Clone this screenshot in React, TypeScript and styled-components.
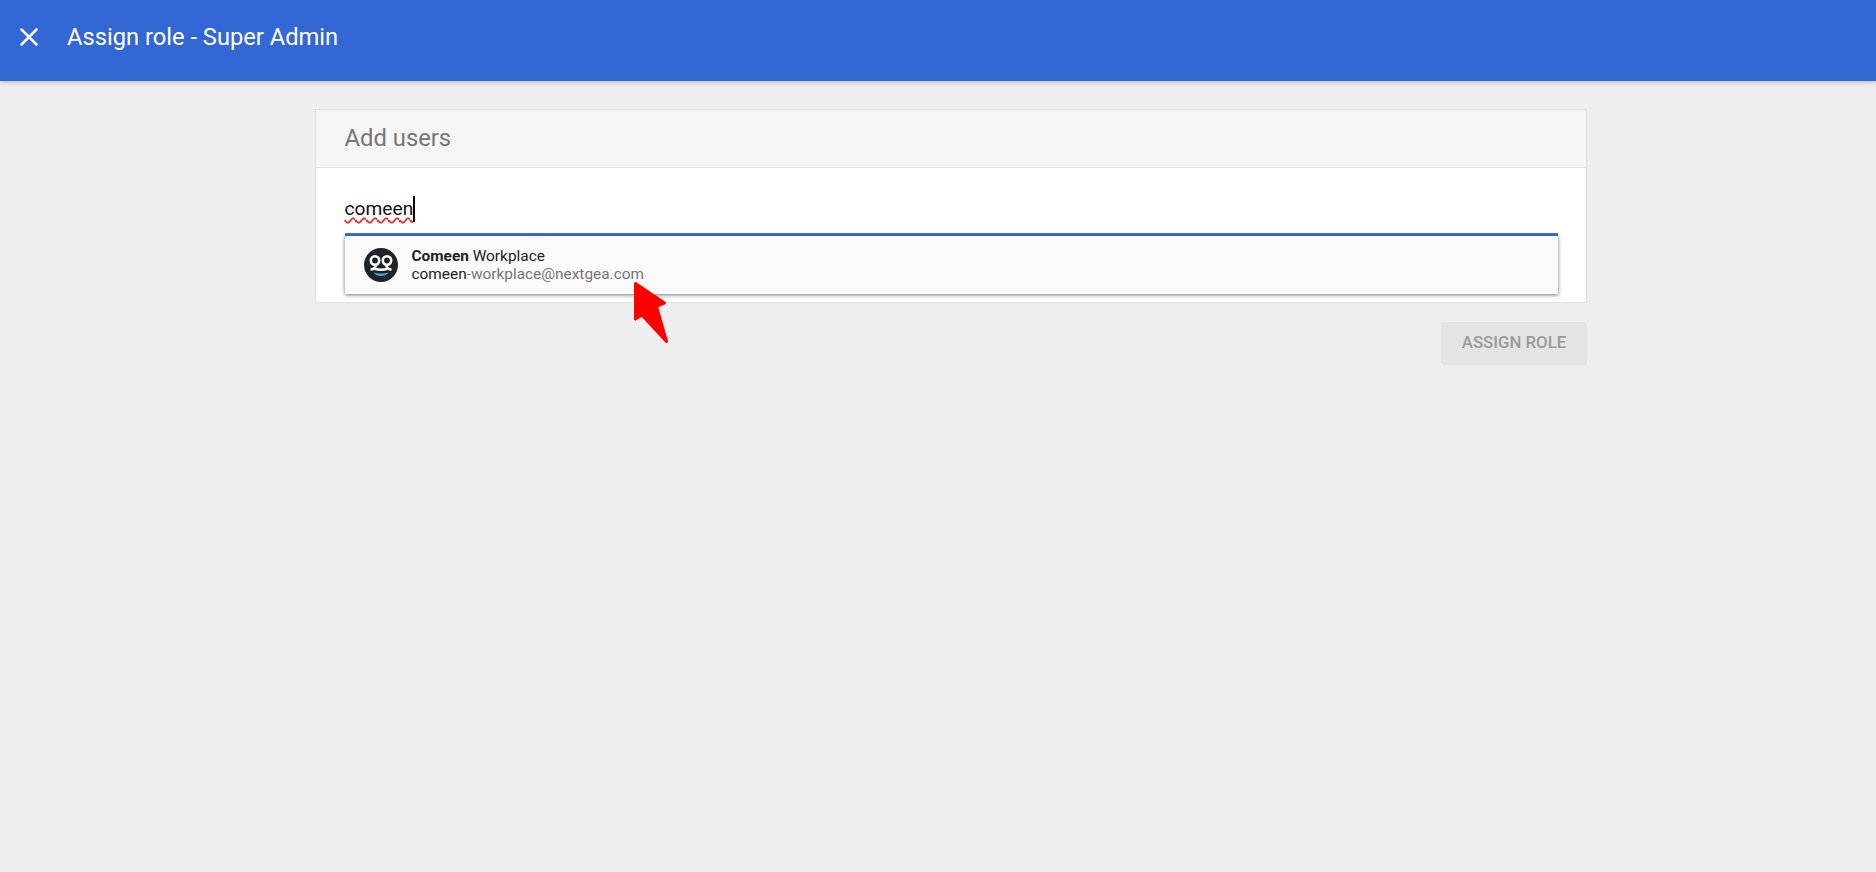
import * as React from 'react'
import styled, { createGlobalStyle } from 'styled-components'
import { X } from 'lucide-react'

const GlobalStyle = createGlobalStyle`
  html, body {
    margin: 0;
    padding: 0;
    height: 100%;
    background: #eeeeee;
    font-family: Roboto, 'Liberation Sans', sans-serif;
  }
`

const Page = styled.div`
  min-height: 872px;
  background: #eeeeee;
`

const TopBar = styled.header`
  display: flex;
  align-items: center;
  height: 81px;
  padding: 0 0 7px 14px;
  box-sizing: border-box;
  background: #3367d6;
  color: #ffffff;
  box-shadow: 0 1px 5px rgba(0, 0, 0, 0.25);
`

const CloseButton = styled.button`
  display: flex;
  width: 30px;
  height: 30px;
  padding: 0;
  border: 0;
  background: none;
  color: inherit;
`

const TopBarTitle = styled.h1`
  margin: 0 0 0 23px;
  font-size: 23.7px;
  font-weight: 400;
  line-height: 28px;
`

const Content = styled.main`
  width: 1272px;
  margin: 28px 0 0 315px;
`

const Card = styled.section`
  height: 194px;
  box-sizing: border-box;
  border: 1px solid #e0e0e0;
  background: #ffffff;
`

const CardHeader = styled.div`
  height: 58px;
  padding: 0 28.5px;
  box-sizing: border-box;
  border-bottom: 1px solid #e0e0e0;
  background: #f5f5f5;
  color: #757575;
  font-size: 23.8px;
  line-height: 56px;
`

const CardBody = styled.div`
  padding: 27px 28.5px 0;
`

const SearchInput = styled.div`
  height: 37px;
  padding-top: 1px;
  border-bottom: 3px solid #3d6fdb;
  color: #111111;
  font-size: 19.2px;
  line-height: 26px;
`

const TypedWord = styled.span`
  display: inline-block;
  height: 26px;
  margin-right: -2px;
  box-shadow: 2px 0 0 #000000;
  text-decoration: underline wavy #e53935 1.5px;
  text-underline-offset: 2px;
`

const Suggestions = styled.div`
  display: flex;
  align-items: center;
  height: 58px;
  padding-left: 19px;
  box-sizing: border-box;
  background: #fafafa;
  box-shadow: 0 1px 4px rgba(0, 0, 0, 0.55);
`

const Avatar = styled.svg`
  flex: none;
  width: 34px;
  height: 34px;
  margin-right: 14px;
`

const UserText = styled.div`
  font-size: 15.4px;
  line-height: 18px;
  color: #212121;
`

const Match = styled.b`
  font-weight: 700;
`

const Muted = styled.span`
  color: #757575;
`

const Actions = styled.div`
  display: flex;
  justify-content: flex-end;
  margin-top: 19px;
`

const AssignButton = styled.button`
  width: 146px;
  height: 43px;
  padding: 0 0 4px;
  border: 0;
  border-radius: 3px;
  background: #e4e4e4;
  color: #9a9a9a;
  font-family: inherit;
  font-size: 16.8px;
  font-weight: 500;
`

const Pointer = styled.svg`
  position: absolute;
  left: 632px;
  top: 280px;
  width: 38px;
  height: 66px;
`

const ComeenLogo = () => (
  <Avatar viewBox="0 0 34 34">
    <circle cx="17" cy="17" r="17" fill="#1d2327" />
    <g fill="none" stroke="#fff" strokeWidth="2.6">
      <circle cx="11" cy="12.500" r="4.200" />
      <circle cx="23" cy="12.500" r="4.200" />
      <path d="M6.500 21.500c3 0 5-2 5.500-5M27.500 21.500c-3 0-5-2-5.500-5M11 21q6 1.500 12 0" />
    </g>
    <path d="M9.500 24.500q7.500 2 15 0q-2.500 3.500-7.500 3.500t-7.500-3.500z" fill="#4f9be3" />
  </Avatar>
)

export default function App() {
  return (
    <Page>
      <GlobalStyle />
      <TopBar>
        <CloseButton aria-label="Close">
          <X size={30} strokeWidth={2} />
        </CloseButton>
        <TopBarTitle>Assign role - Super Admin</TopBarTitle>
      </TopBar>
      <Content>
        <Card>
          <CardHeader>Add users</CardHeader>
          <CardBody>
            <SearchInput>
              <TypedWord>comeen</TypedWord>
            </SearchInput>
            <Suggestions>
              <ComeenLogo />
              <UserText>
                <div>
                  <Match>Comeen</Match> Workplace
                </div>
                <div>
                  comeen<Muted>-workplace@nextgea.com</Muted>
                </div>
              </UserText>
            </Suggestions>
          </CardBody>
        </Card>
        <Actions>
          <AssignButton disabled>ASSIGN ROLE</AssignButton>
        </Actions>
      </Content>
      <Pointer viewBox="0 0 38 66">
        <path d="M3.500 3.500 L32.500 23 L24.500 26.500 L34.500 61.500 L10 35 L3.500 39 Z" fill="#ff0000" stroke="#ff0000" strokeWidth="3" strokeLinejoin="round" />
      </Pointer>
    </Page>
  )
}
